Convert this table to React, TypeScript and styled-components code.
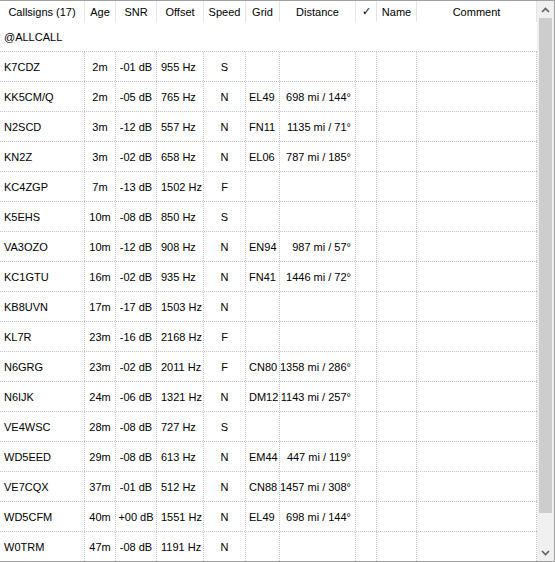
import React from "react";
import styled, { createGlobalStyle } from "styled-components";

const Global = createGlobalStyle`
  html, body { margin: 0; padding: 0; background: #ffffff; }
  body { font-family: "Liberation Sans", Arial, sans-serif; }
`;

type Align = "left" | "center" | "right";

interface Col {
  title: string;
  width: number;
  align: Align;
  pad: number;
}

const COLS: Col[] = [
  { title: "Callsigns (17)", width: 85, align: "left", pad: 4 },
  { title: "Age", width: 31, align: "center", pad: 0 },
  { title: "SNR", width: 41, align: "center", pad: 0 },
  { title: "Offset", width: 47, align: "left", pad: 4 },
  { title: "Speed", width: 42, align: "center", pad: 0 },
  { title: "Grid", width: 34, align: "left", pad: 3 },
  { title: "Distance", width: 76, align: "right", pad: 4 },
  { title: "\u2713", width: 21, align: "center", pad: 0 },
  { title: "Name", width: 40, align: "left", pad: 3 },
  { title: "Comment", width: 120, align: "left", pad: 3 },
];

const ROWS: string[][] = [
  ["K7CDZ", "2m", "-01 dB", "955 Hz", "S", "", ""],
  ["KK5CM/Q", "2m", "-05 dB", "765 Hz", "N", "EL49", "698 mi / 144°"],
  ["N2SCD", "3m", "-12 dB", "557 Hz", "N", "FN11", "1135 mi / 71°"],
  ["KN2Z", "3m", "-02 dB", "658 Hz", "N", "EL06", "787 mi / 185°"],
  ["KC4ZGP", "7m", "-13 dB", "1502 Hz", "F", "", ""],
  ["K5EHS", "10m", "-08 dB", "850 Hz", "S", "", ""],
  ["VA3OZO", "10m", "-12 dB", "908 Hz", "N", "EN94", "987 mi / 57°"],
  ["KC1GTU", "16m", "-02 dB", "935 Hz", "N", "FN41", "1446 mi / 72°"],
  ["KB8UVN", "17m", "-17 dB", "1503 Hz", "N", "", ""],
  ["KL7R", "23m", "-16 dB", "2168 Hz", "F", "", ""],
  ["N6GRG", "23m", "-02 dB", "2011 Hz", "F", "CN80", "1358 mi / 286°"],
  ["N6IJK", "24m", "-06 dB", "1321 Hz", "N", "DM12", "1143 mi / 257°"],
  ["VE4WSC", "28m", "-08 dB", "727 Hz", "S", "", ""],
  ["WD5EED", "29m", "-08 dB", "613 Hz", "N", "EM44", "447 mi / 119°"],
  ["VE7CQX", "37m", "-01 dB", "512 Hz", "N", "CN88", "1457 mi / 308°"],
  ["WD5CFM", "40m", "+00 dB", "1551 Hz", "N", "EL49", "698 mi / 144°"],
  ["W0TRM", "47m", "-08 dB", "1191 Hz", "N", "", ""],
];

const GRID = COLS.map((c) => `${c.width}px`).join(" ");

const Frame = styled.div`
  width: 555px;
  height: 562px;
  box-sizing: border-box;
  border: 1px solid #a0a0a0;
  border-left: none;
  display: flex;
  overflow: hidden;
  background: #ffffff;
  font-size: 11px;
  color: #000000;
`;

const TableArea = styled.div`
  flex: 0 0 537px;
  display: flex;
  flex-direction: column;
  overflow: hidden;
`;

const HeaderRow = styled.div`
  display: grid;
  grid-template-columns: ${GRID};
  height: 21px;
  flex: 0 0 21px;
  background: #ffffff;
`;

const HeaderCell = styled.div`
  display: flex;
  align-items: center;
  justify-content: center;
  border-right: 1px solid #e5e5e5;
  white-space: nowrap;
`;

const Row = styled.div`
  display: grid;
  grid-template-columns: ${GRID};
  height: 30px;
  flex: 0 0 30px;
  box-sizing: border-box;
  border-bottom: 1px dotted #c4c4c4;
`;

const SpanRow = styled.div`
  height: 30px;
  flex: 0 0 30px;
  box-sizing: border-box;
  border-bottom: 1px dotted #c4c4c4;
  display: flex;
  align-items: center;
  padding-left: 4px;
`;

const Cell = styled.div<{ $align: Align; $pad: number }>`
  display: flex;
  align-items: center;
  justify-content: ${(p) =>
    p.$align === "left" ? "flex-start" : p.$align === "right" ? "flex-end" : "center"};
  padding: 0 ${(p) => (p.$align === "right" ? p.$pad : 0)}px 0
    ${(p) => (p.$align === "left" ? p.$pad : 0)}px;
  border-right: 1px dotted #c4c4c4;
  white-space: nowrap;
  overflow: hidden;
`;

const ScrollBar = styled.div`
  flex: 0 0 17px;
  background: #f0f0f0;
  display: flex;
  flex-direction: column;
`;

const ArrowBtn = styled.div`
  flex: 0 0 17px;
  display: flex;
  align-items: center;
  justify-content: center;
`;

const Track = styled.div`
  flex: 1;
  display: flex;
  flex-direction: column;
  padding: 0 2px 31px 2px;
`;

const Thumb = styled.div`
  flex: 1;
  background: #cdcdcd;
`;

const Chevron: React.FC<{ up?: boolean }> = ({ up }) => (
  <svg width="9" height="6" viewBox="0 0 9 6">
    <path
      d={up ? "M1 5 L4.5 1.5 L8 5" : "M1 1 L4.5 4.5 L8 1"}
      fill="none"
      stroke="#606060"
      strokeWidth="1.6"
    />
  </svg>
);

export default function App() {
  return (
    <>
      <Global />
      <Frame>
        <TableArea>
          <HeaderRow>
            {COLS.map((c) => (
              <HeaderCell key={c.title}>{c.title}</HeaderCell>
            ))}
          </HeaderRow>
          <SpanRow>@ALLCALL</SpanRow>
          {ROWS.map((r) => {
            const cells = [...r, "", "", ""];
            return (
              <Row key={r[0]}>
                {COLS.map((c, i) => (
                  <Cell key={i} $align={c.align} $pad={c.pad}>
                    {cells[i]}
                  </Cell>
                ))}
              </Row>
            );
          })}
        </TableArea>
        <ScrollBar>
          <ArrowBtn>
            <Chevron up />
          </ArrowBtn>
          <Track>
            <Thumb />
          </Track>
          <ArrowBtn>
            <Chevron />
          </ArrowBtn>
        </ScrollBar>
      </Frame>
    </>
  );
}
